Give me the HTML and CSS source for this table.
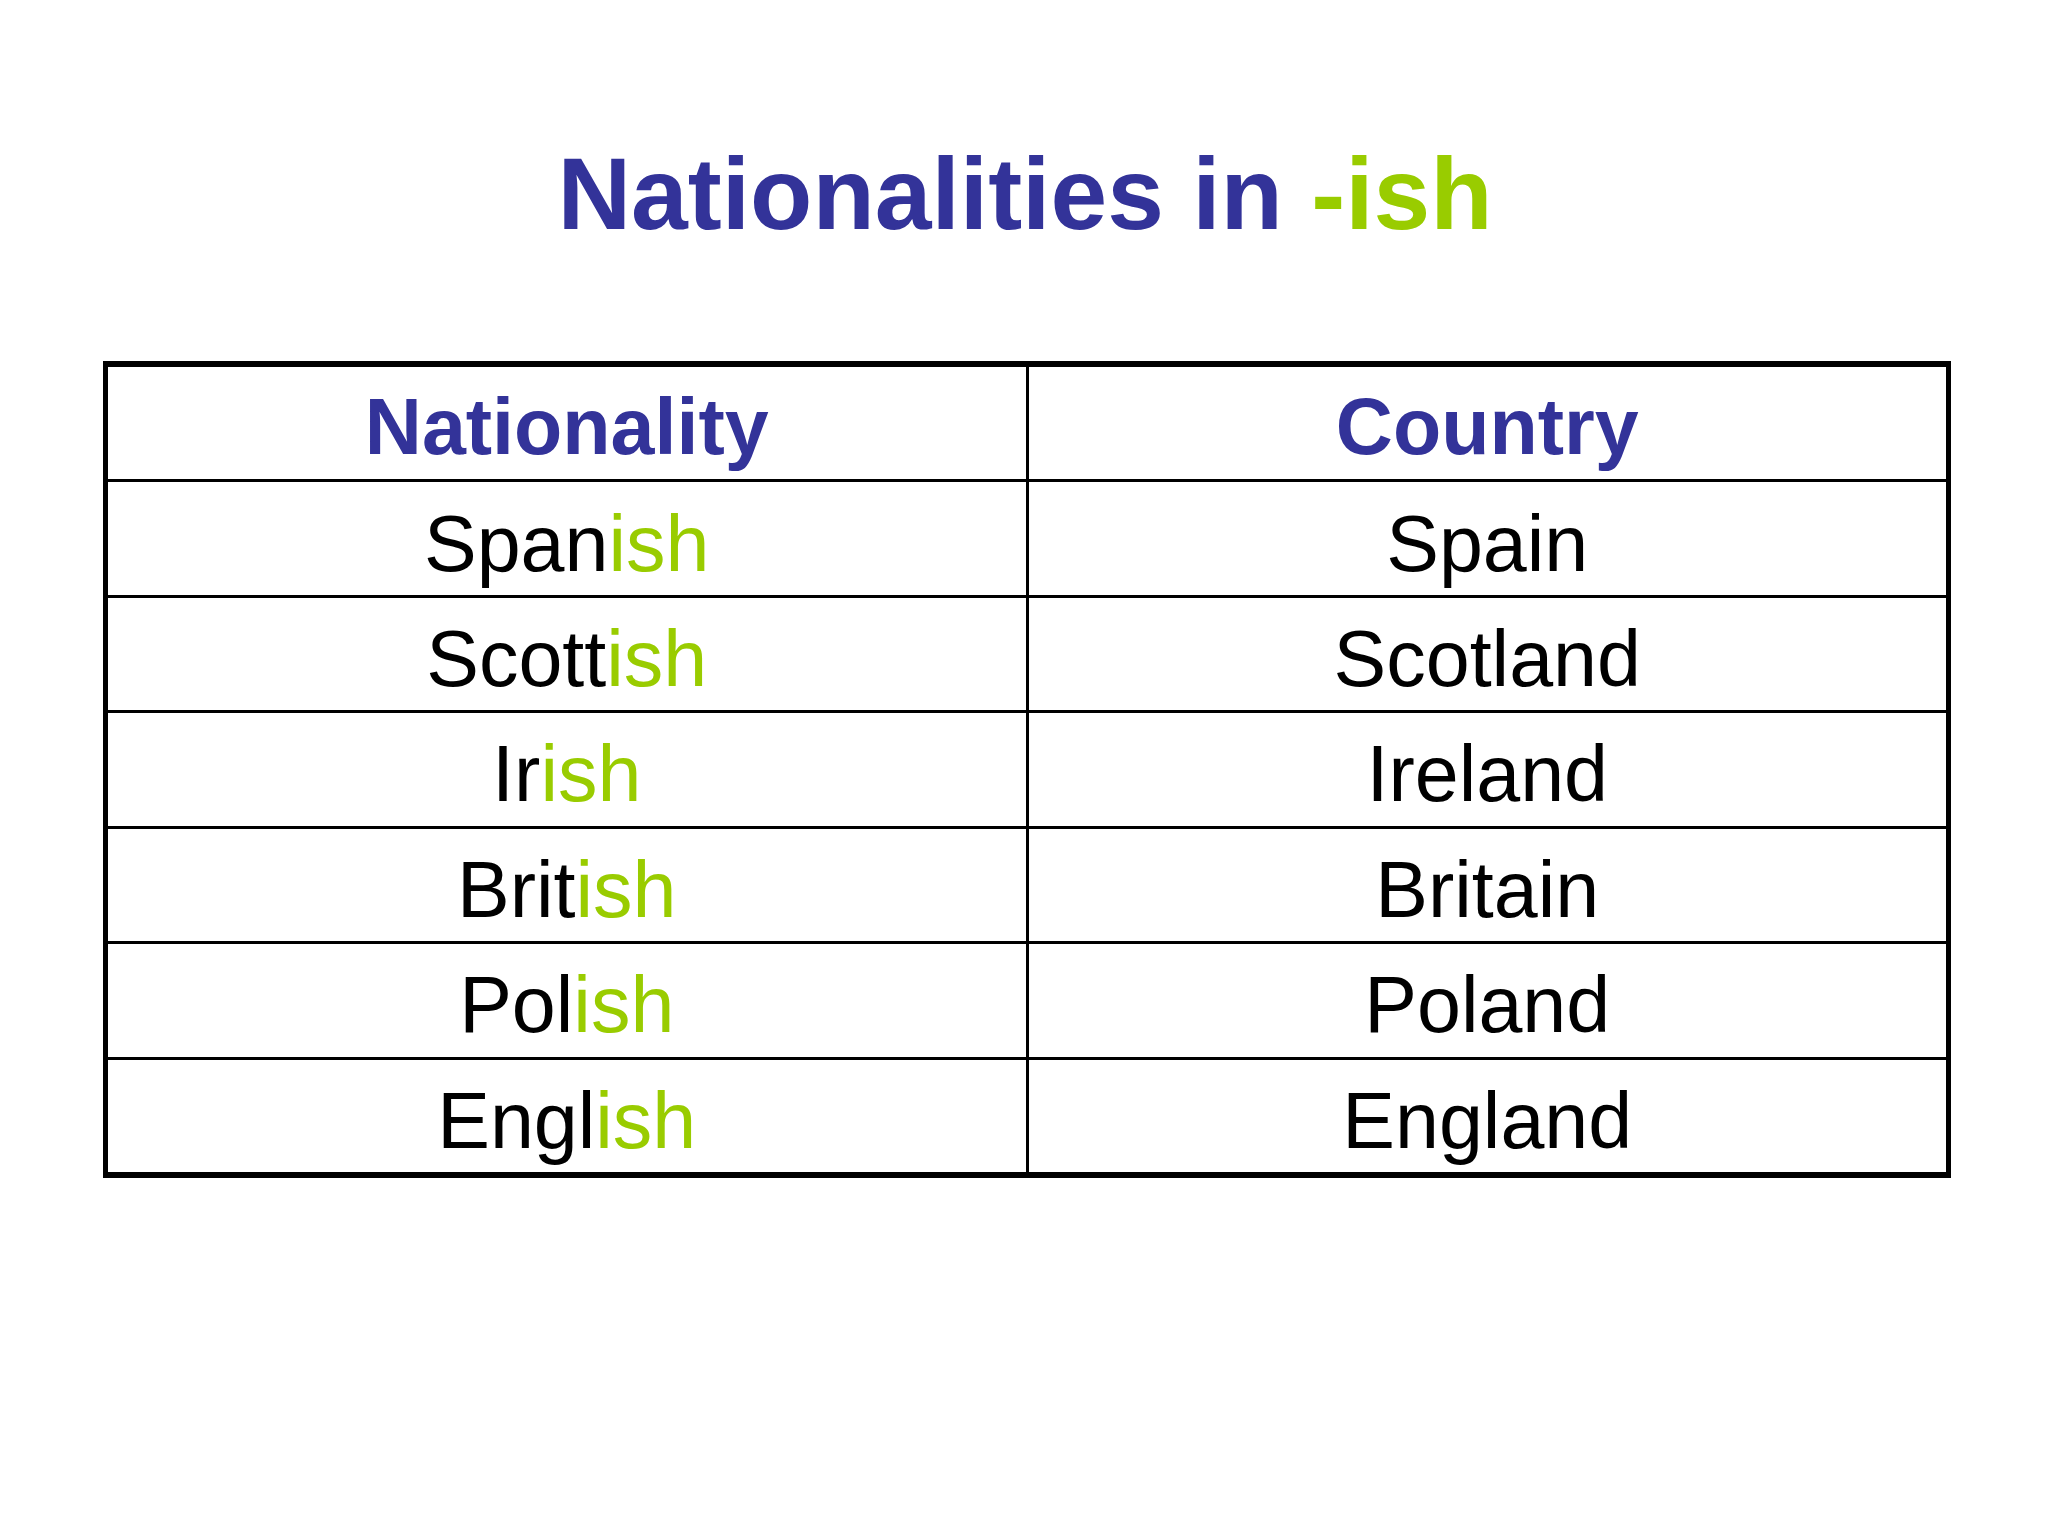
FILE: index.html
```html
<!DOCTYPE html>
<html lang="en">
<head>
<meta charset="utf-8">
<title>Nationalities in -ish</title>
<link rel="stylesheet" href="styles.css">
</head>
<body>
<main class="slide">
  <h1 class="title">Nationalities in <span class="accent">-ish</span></h1>
  <div class="grid-table">
    <div class="cell head">Nationality</div>
    <div class="cell head">Country</div>
    <div class="cell">Span<span class="accent">ish</span></div>
    <div class="cell">Spain</div>
    <div class="cell">Scott<span class="accent">ish</span></div>
    <div class="cell">Scotland</div>
    <div class="cell">Ir<span class="accent">ish</span></div>
    <div class="cell">Ireland</div>
    <div class="cell">Brit<span class="accent">ish</span></div>
    <div class="cell">Britain</div>
    <div class="cell">Pol<span class="accent">ish</span></div>
    <div class="cell">Poland</div>
    <div class="cell">Engl<span class="accent">ish</span></div>
    <div class="cell">England</div>
  </div>
</main>
</body>
</html>
```

FILE: styles.css
```css
html, body {
  margin: 0;
  padding: 0;
  background: #ffffff;
}

body {
  width: 2048px;
  height: 1536px;
  font-family: "Liberation Sans", Arial, sans-serif;
  color: #000000;
}

.slide {
  padding-top: 136px;
}

.title {
  margin: 0;
  text-align: center;
  font-size: 102px;
  line-height: 117px;
  font-weight: 700;
  color: #333399;
  padding-left: 2px;
}

.accent {
  color: #99cc00;
}

.grid-table {
  box-sizing: border-box;
  margin: 108px 0 0 103px;
  width: 1848px;
  height: 817px;
  border: 5px solid #000000;
  border-top-width: 6px;
  border-bottom-width: 6px;
  background: #000000;
  display: grid;
  grid-template-columns: 1fr 1fr;
  grid-template-rows: repeat(7, 1fr);
  gap: 3px;
}

.cell {
  background: #ffffff;
  display: flex;
  align-items: center;
  justify-content: center;
  box-sizing: border-box;
  padding-top: 10px;
  font-size: 79px;
  line-height: normal;
}

.head {
  font-weight: 700;
  color: #333399;
  padding-top: 7px;
}
```
